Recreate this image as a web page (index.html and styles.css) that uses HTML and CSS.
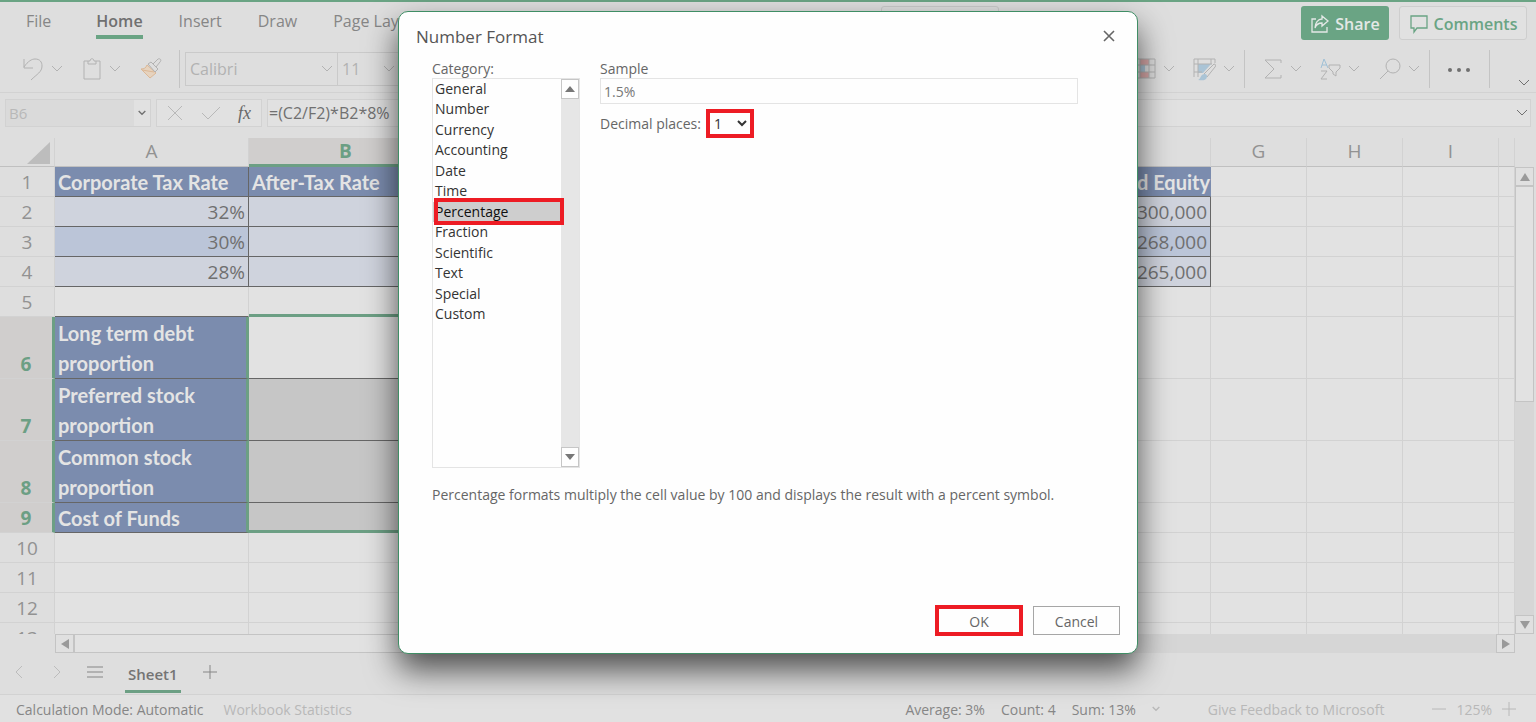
FILE: index.html
```html
<!DOCTYPE html>
<html lang="en">

<head>
    <meta charset="UTF-8">
    <meta name="viewport" content="width=device-width, initial-scale=1.0">
    <title>Number Format</title>
    <link rel="stylesheet" href="styles.css">
</head>

<body>

    <svg class="defs" aria-hidden="true">
        <symbol id="chev" viewBox="0 0 12 8"><path d="M1 1l5 5 5-5" /></symbol>
    </svg>

    <header class="tabs">
        <nav class="menu">
            <a href="#">File</a>
            <a href="#" class="active">Home</a>
            <a href="#">Insert</a>
            <a href="#">Draw</a>
            <a href="#">Page Layout</a>
        </nav>
        <div class="actions">
            <button class="mode" aria-label="Mode"></button>
            <button class="share">
                <svg width="20" height="20" viewBox="0 0 20 20"><path d="M6 5H2v13h15v-5M12 2l6 5-6 5V9C8 9 6 11 5 14c0-5 3-9 7-9z" /></svg>
                Share
            </button>
            <button class="comments">
                <svg width="20" height="20" viewBox="0 0 20 20"><path d="M2 2h16v12H8l-3 4v-4H2z" /></svg>
                Comments
            </button>
        </div>
    </header>

    <div class="ribbon">
        <div class="group left">
            <button class="tool" aria-label="Undo">
                <svg width="22" height="24" viewBox="0 0 22 24"><path d="M2 2v9h9M2 10C6 4 10 2 13 2c5 0 7 3 7 7 0 6-5 8-11 14" /></svg>
                <svg class="chev"><use href="#chev" /></svg>
            </button>
            <button class="tool" aria-label="Paste">
                <svg width="20" height="24" viewBox="0 0 20 24"><path d="M6 4H2v18h16V4h-4M6 7V4h2c0-3 4-3 4 0h2v3z" /></svg>
                <svg class="chev"><use href="#chev" /></svg>
            </button>
            <button class="tool" aria-label="Format Painter">
                <svg width="22" height="22" viewBox="0 0 22 22"><path class="orange" d="M7 7l9 8-6 5L1 11c3 0 5-1 6-4zM2 12l12 2" /><path d="M8 6l3-2 7 7-3 3zM13 6l5-5c2-1 4 1 2 3l-4 5" /></svg>
            </button>
            <span class="sep"></span>
            <div class="font">
                <button class="fname">Calibri <svg class="chev"><use href="#chev" /></svg></button>
                <button class="fsize">11 <svg class="chev"><use href="#chev" /></svg></button>
            </div>
        </div>
        <div class="group right">
            <button class="tool" aria-label="Conditional Formatting">
                <svg width="22" height="22" viewBox="0 0 22 22"><path class="red" d="M6 1h9v6H6zM6 14h9v6H6z" /><path class="blue" d="M6 7h5v7H6z" /><path d="M1 1h20v19H1zM1 7h20M1 14h20M6 1v19M15 1v19" /></svg>
                <svg class="chev"><use href="#chev" /></svg>
            </button>
            <button class="tool" aria-label="Format as Table">
                <svg width="24" height="24" viewBox="0 0 24 24"><path class="blue" d="M6 7h13l-8 9H6z" /><path d="M2 20V2h21v4M2 7h18M2 15h8M6 2v18M19 2v5" /><path d="M12 17L22 7c2 0 2 2 1 3l-8 10z" /><path class="blue" d="M12 17c3 0 4 2 2 5-2 2-5 1-8 1 3-1 2-5 6-6z" /></svg>
                <svg class="chev"><use href="#chev" /></svg>
            </button>
            <span class="sep"></span>
            <button class="tool" aria-label="AutoSum">
                <svg width="20" height="22" viewBox="0 0 20 22"><path d="M18 5V2H2l9 9-9 9h16v-3" /></svg>
                <svg class="chev"><use href="#chev" /></svg>
            </button>
            <button class="tool" aria-label="Sort and Filter">
                <svg width="22" height="24" viewBox="0 0 22 24"><path class="blueline" d="M2 11l3-9 4 9M3 8h5" /><path d="M2 14h6l-6 8h6M10 8h11v3l-4 4v4l-3-2v-2l-4-4z" /></svg>
                <svg class="chev"><use href="#chev" /></svg>
            </button>
            <button class="tool" aria-label="Find">
                <svg width="24" height="24" viewBox="0 0 24 24"><circle cx="16" cy="9" r="7" /><path d="M11 14l-8 8" /></svg>
                <svg class="chev"><use href="#chev" /></svg>
            </button>
            <span class="sep"></span>
            <button class="more" aria-label="More">
                <svg width="22" height="4" viewBox="0 0 22 4"><circle cx="2" cy="2" r="2" /><circle cx="11" cy="2" r="2" /><circle cx="20" cy="2" r="2" /></svg>
            </button>
            <span class="sep"></span>
            <button class="collapse" aria-label="Collapse Ribbon"><svg class="chev"><use href="#chev" /></svg></button>
        </div>
    </div>

    <div class="formula">
        <div class="namebox">
            <input type="text" value="B6" aria-label="Name Box">
            <button aria-label="Names"><svg class="chev small"><use href="#chev" /></svg></button>
        </div>
        <div class="fx">
            <svg width="16" height="16" viewBox="0 0 16 16"><path d="M1 1l14 14M15 1L1 15" /></svg>
            <svg width="20" height="16" viewBox="0 0 20 16"><path d="M1 8l6 6L19 2" /></svg>
            <i>fx</i>
        </div>
        <div class="bar">
            <input type="text" value="=(C2/F2)*B2*8%" aria-label="Formula">
            <svg class="chev"><use href="#chev" /></svg>
        </div>
    </div>

    <main class="sheet">
        <div class="grid">
            <table>
                <colgroup>
                    <col class="c-num">
                    <col class="c-wide" span="2">
                    <col class="c-mid" span="4">
                    <col class="c-norm" span="3">
                    <col>
                </colgroup>
                <thead>
                    <tr>
                        <th class="corner"><svg width="24" height="22" viewBox="0 0 24 22"><path d="M23 0v22H0z" /></svg></th>
                        <th>A</th><th class="sel">B</th><th>C</th><th>D</th><th>E</th><th>F</th><th>G</th><th>H</th><th>I</th><th></th>
                    </tr>
                </thead>
                <tbody>
                    <tr>
                        <th>1</th><td class="head">Corporate Tax Rate</td><td class="head">After-Tax Rate</td><td class="head"></td><td class="head"></td><td class="head"></td><td class="head end">d Equity</td><td></td><td></td><td></td><td></td>
                    </tr>
                    <tr>
                        <th>2</th><td class="val">32%</td><td class="val"></td><td class="val"></td><td class="val"></td><td class="val"></td><td class="val">300,000</td><td></td><td></td><td></td><td></td>
                    </tr>
                    <tr>
                        <th>3</th><td class="val dark">30%</td><td class="val"></td><td class="val"></td><td class="val"></td><td class="val"></td><td class="val dark">268,000</td><td></td><td></td><td></td><td></td>
                    </tr>
                    <tr>
                        <th>4</th><td class="val">28%</td><td class="val"></td><td class="val"></td><td class="val"></td><td class="val"></td><td class="val">265,000</td><td></td><td></td><td></td><td></td>
                    </tr>
                    <tr class="before">
                        <th>5</th><td></td><td></td><td></td><td></td><td></td><td></td><td></td><td></td><td></td><td></td>
                    </tr>
                    <tr class="picked">
                        <th>6</th><td class="head">Long term debt proportion</td><td class="cur"></td><td></td><td></td><td></td><td></td><td></td><td></td><td></td><td></td>
                    </tr>
                    <tr class="picked">
                        <th>7</th><td class="head">Preferred stock proportion</td><td></td><td></td><td></td><td></td><td></td><td></td><td></td><td></td><td></td>
                    </tr>
                    <tr class="picked">
                        <th>8</th><td class="head">Common stock proportion</td><td></td><td></td><td></td><td></td><td></td><td></td><td></td><td></td><td></td>
                    </tr>
                    <tr class="picked last">
                        <th>9</th><td class="head">Cost of Funds</td><td></td><td></td><td></td><td></td><td></td><td></td><td></td><td></td><td></td>
                    </tr>
                    <tr>
                        <th>10</th><td></td><td></td><td></td><td></td><td></td><td></td><td></td><td></td><td></td><td></td>
                    </tr>
                    <tr>
                        <th>11</th><td></td><td></td><td></td><td></td><td></td><td></td><td></td><td></td><td></td><td></td>
                    </tr>
                    <tr>
                        <th>12</th><td></td><td></td><td></td><td></td><td></td><td></td><td></td><td></td><td></td><td></td>
                    </tr>
                    <tr>
                        <th>13</th><td></td><td></td><td></td><td></td><td></td><td></td><td></td><td></td><td></td><td></td>
                    </tr>
                </tbody>
            </table>
        </div>
        <div class="vscroll">
            <button aria-label="Up"><svg width="10" height="8" viewBox="0 0 10 8"><path d="M5 0l5 8H0z" /></svg></button>
            <span class="thumb"></span>
            <span class="track"></span>
            <button aria-label="Down"><svg width="10" height="8" viewBox="0 0 10 8"><path d="M5 8l5-8H0z" /></svg></button>
        </div>
    </main>

    <div class="hscroll">
        <button aria-label="Left"><svg width="8" height="10" viewBox="0 0 8 10"><path d="M0 5l8-5v10z" /></svg></button>
        <span class="thumb"></span>
        <span class="track"></span>
        <button aria-label="Right"><svg width="8" height="10" viewBox="0 0 8 10"><path d="M8 5L0 0v10z" /></svg></button>
    </div>

    <div class="sheets">
        <button class="nav" aria-label="Previous"><svg width="8" height="14" viewBox="0 0 8 14"><path d="M7 1L1 7l6 6" /></svg></button>
        <button class="nav" aria-label="Next"><svg width="8" height="14" viewBox="0 0 8 14"><path d="M1 1l6 6-6 6" /></svg></button>
        <button class="list" aria-label="All Sheets"><svg width="16" height="14" viewBox="0 0 16 14"><path d="M0 2h16M0 7h16M0 12h16" /></svg></button>
        <button class="tab">Sheet1</button>
        <button class="add" aria-label="New Sheet"><svg width="14" height="14" viewBox="0 0 14 14"><path d="M7 0v14M0 7h14" /></svg></button>
    </div>

    <footer class="status">
        <span>Calculation Mode: Automatic</span>
        <span class="dim">Workbook Statistics</span>
        <div class="stats">
            <span>Average: 3%</span>
            <span>Count: 4</span>
            <span>Sum: 13%</span>
            <svg class="chev small dim"><use href="#chev" /></svg>
        </div>
        <a href="#" class="feedback dim">Give Feedback to Microsoft</a>
        <div class="zoom dim">
            <svg width="14" height="14" viewBox="0 0 14 14"><path d="M0 7h14" /></svg>
            <span>125%</span>
            <svg width="14" height="14" viewBox="0 0 14 14"><path d="M0 7h14M7 0v14" /></svg>
        </div>
    </footer>

    <div class="overlay">
        <form class="dialog">
            <div class="title">
                <h1>Number Format</h1>
                <button type="button" class="close" aria-label="Close"><svg width="12" height="12" viewBox="0 0 12 12"><path d="M1 1l10 10M11 1L1 11" /></svg></button>
            </div>
            <div class="content">
                <div class="category">
                    <label for="category">Category:</label>
                    <div class="listbox">
                        <select id="category" size="12">
                            <option>General</option>
                            <option>Number</option>
                            <option>Currency</option>
                            <option>Accounting</option>
                            <option>Date</option>
                            <option>Time</option>
                            <option selected>Percentage</option>
                            <option>Fraction</option>
                            <option>Scientific</option>
                            <option>Text</option>
                            <option>Special</option>
                            <option>Custom</option>
                        </select>
                        <div class="listscroll">
                            <button type="button" aria-label="Up"><svg width="10" height="6" viewBox="0 0 10 6"><path d="M5 0l5 6H0z" /></svg></button>
                            <button type="button" aria-label="Down"><svg width="10" height="6" viewBox="0 0 10 6"><path d="M5 6l5-6H0z" /></svg></button>
                        </div>
                        <span class="mark"></span>
                    </div>
                </div>
                <div class="options">
                    <label for="sample">Sample</label>
                    <input type="text" id="sample" value="1.5%" readonly>
                    <div class="places">
                        <label for="places">Decimal places:</label>
                        <select id="places">
                            <option>1</option>
                        </select>
                    </div>
                </div>
            </div>
            <p>Percentage formats multiply the cell value by 100 and displays the result with a percent symbol.</p>
            <div class="buttons">
                <button type="button" class="ok">OK</button>
                <button type="button" class="cancel">Cancel</button>
            </div>
        </form>
    </div>

</body>

</html>
```
FILE: styles.css
```css
*{
    margin: 0;
    padding: 0;
    box-sizing: border-box;
}
body{
    height: 100vh;
    display: flex;
    flex-direction: column;
    overflow: hidden;
    background: #dedede;
    border-top: 2px solid #6aa484;
    font-family: "Open Sans", "Noto Sans", sans-serif;
    font-size: 14px;
    color: #868686;
}
button, input, select{
    font: inherit;
    color: inherit;
    background: none;
    border: none;
    border-radius: 0;
    outline: none;
}
a{
    color: inherit;
    text-decoration: none;
}
svg{
    fill: none;
    stroke: currentColor;
    flex-shrink: 0;
}
.defs{
    position: absolute;
    width: 0;
    height: 0;
}
.chev{
    width: 12px;
    height: 8px;
}
.chev.small{
    width: 8px;
    height: 6px;
    stroke-width: 2;
}

/* tabs */
.tabs{
    height: 44px;
    flex-shrink: 0;
    display: flex;
    justify-content: space-between;
}
.menu{
    display: flex;
    align-items: flex-start;
    gap: 36px;
    padding-left: 26px;
    font-size: 16px;
    line-height: 22px;
}
.menu a{
    padding: 8px 0 3px;
    border-bottom: 4px solid transparent;
    white-space: nowrap;
}
.menu .active{
    margin-left: 9px;
    color: #707070;
    font-weight: 600;
    border-color: #6aa484;
}
.actions{
    display: flex;
    gap: 10px;
    padding: 4px 9px 0 0;
}
.actions button{
    display: flex;
    align-items: center;
    justify-content: center;
    gap: 5px;
    height: 34px;
    padding-top: 2px;
    border-radius: 3px;
    font-size: 16px;
    font-weight: 600;
}
.actions svg{
    stroke-width: 1.3;
}
.actions .mode{
    width: 118px;
    margin-right: 292px;
    border: 1px solid #cacaca;
}
.actions .share{
    width: 88px;
    background: #6aa484;
    color: #e4e8e6;
}
.actions .comments{
    width: 128px;
    background: #e1e1e1;
    border: 1px solid #cecece;
    color: #6aa484;
}

/* ribbon */
.ribbon{
    height: 47px;
    flex-shrink: 0;
    display: flex;
    justify-content: space-between;
    padding: 0 6px 0 22px;
    border-bottom: 1px solid #d2d2d2;
    color: #b2b2b2;
}
.group{
    display: flex;
    align-items: center;
    gap: 19px;
}
.group.right{
    gap: 17px;
}
.tool{
    display: flex;
    align-items: center;
    gap: 7px;
}
.sep{
    width: 1px;
    height: 38px;
    background: #c4c4c4;
}
.left .sep{
    margin-left: -2px;
}
.right .sep{
    margin: 0 1px 0 -8px;
}
.orange{
    stroke: #dcb896;
    fill: #e6d3bf;
}
.red{
    fill: #d8a8a8;
    stroke: none;
}
.blue{
    fill: #aac4d6;
    stroke: none;
}
.blueline{
    stroke: #9fc0d6;
}
.font{
    display: flex;
    margin-left: -14px;
    font-size: 16px;
}
.font button{
    display: flex;
    align-items: center;
    justify-content: space-between;
    height: 34px;
    padding: 0 4px;
    border: 1px solid #cacaca;
}
.font .fname{
    width: 153px;
}
.font .fsize{
    width: 62px;
    border-left: none;
}
.more{
    padding-right: 10px;
    line-height: 0;
}
.more svg{
    fill: #707070;
    stroke: none;
}
.collapse{
    align-self: flex-end;
    padding: 0 0 5px 10px;
    line-height: 0;
    color: #707070;
}

/* formula bar */
.formula{
    flex-shrink: 0;
    display: flex;
    gap: 5px;
    padding: 6px 5px 11px;
}
.formula > div{
    display: flex;
    align-items: center;
    height: 28px;
    border: 1px solid #d2d2d2;
    background: #e1e1e1;
}
.formula .namebox{
    width: 146px;
    font-size: 15px;
}
.namebox input{
    width: 128px;
    height: 26px;
    padding-left: 3px;
    background: #dadada;
    color: #b8b8b8;
}
.namebox button{
    flex: 1;
    display: flex;
    justify-content: center;
    color: #707070;
}
.fx{
    width: 106px;
    padding: 0 10px;
    justify-content: space-between;
    color: #b8b8b8;
}
.fx i{
    color: #686868;
    font-family: "Liberation Serif", serif;
    font-size: 18px;
}
.bar{
    flex: 1;
    padding: 0 2px 0 1px;
    color: #707070;
}
.bar input{
    flex: 1;
    font-size: 16px;
}

/* grid */
.sheet{
    flex: 1;
    min-height: 0;
    display: flex;
}
.grid{
    flex: 1;
    min-width: 0;
    overflow: hidden;
}
table{
    width: 100%;
    table-layout: fixed;
    border-collapse: separate;
    border-spacing: 0;
}
.c-num{
    width: 55px;
}
.c-wide{
    width: 194px;
}
.c-mid{
    width: 192px;
}
.c-norm{
    width: 96px;
}
th, td{
    padding-top: 2px;
    line-height: 27px;
    border-right: 1px solid #d2d2d2;
    border-bottom: 1px solid #d2d2d2;
    vertical-align: bottom;
}
th{
    font-size: 19px;
    font-weight: 400;
    color: #929292;
}
thead th{
    height: 29px;
    padding-top: 0;
    line-height: 26px;
    vertical-align: top;
    border-bottom-color: #c0c0c0;
}
thead .corner{
    text-align: right;
    line-height: 0;
    padding: 4px 3px 0 0;
}
.corner svg{
    fill: #bdbdbd;
    stroke: none;
}
thead .sel{
    background: #d0cecd;
    color: #6c9f84;
    font-weight: 700;
    border-bottom: 3px solid #6c9f84;
}
td{
    background: #e2e2e2;
}
.head{
    padding-left: 3px;
    background: #7b8cae;
    border-color: #666;
    color: #e4e4e4;
    font-family: Lato, "Open Sans", sans-serif;
    font-size: 20px;
    font-weight: 700;
}
.head.end{
    text-align: right;
    border-right-color: #7b8cae;
}
.val{
    height: 30px;
    padding-right: 3px;
    background: #cfd3dd;
    border-color: #666;
    color: #707070;
    font-size: 19px;
    text-align: right;
}
.val.dark{
    background: #bbc5d8;
}
.before td:nth-child(2){
    border-bottom-color: #666;
}
.before td:nth-child(3){
    border-bottom: 3px solid #6c9f84;
}
.picked th{
    background: #d0cecd;
    color: #6c9f84;
    font-weight: 700;
    border-right: 3px solid #6c9f84;
}
.picked .head{
    padding-top: 1px;
    line-height: 30px;
    border-right: 3px solid #6c9f84;
}
.picked td:nth-child(3){
    background: #c6c6c6;
    border-bottom-color: #666;
}
.picked .cur:nth-child(3){
    background: #e2e2e2;
}
.picked.last .head{
    line-height: 27px;
}
.picked.last td:nth-child(3){
    border-bottom: 3px solid #6c9f84;
}

/* scroll bars */
.vscroll{
    width: 21px;
    padding: 29px 2px 0 0;
    display: flex;
    flex-direction: column;
}
.vscroll button, .hscroll button{
    display: flex;
    align-items: center;
    justify-content: center;
    width: 19px;
    height: 19px;
    flex-shrink: 0;
    border: 1px solid #c4c4c4;
    background: #e0e0e0;
    color: #9a9a9a;
}
.vscroll svg, .hscroll svg{
    fill: currentColor;
    stroke: none;
}
.thumb{
    background: #e2e2e2;
    border: 1px solid #c4c4c4;
}
.track{
    background: #d6d6d6;
}
.vscroll .thumb, .vscroll .track{
    flex: 1;
}
.hscroll{
    display: flex;
    padding: 0 21px 0 55px;
}
.hscroll .thumb, .hscroll .track{
    flex: 1;
}

/* sheet tabs */
.sheets{
    height: 41px;
    flex-shrink: 0;
    display: flex;
    align-items: center;
    gap: 30px;
    padding-left: 15px;
}
.sheets .nav{
    color: #bcbcbc;
}
.sheets .list{
    margin: 0 -8px 0 -4px;
}
.sheets .tab{
    align-self: flex-end;
    height: 36px;
    margin: 0 -8px 1px 0;
    padding: 0 3px;
    border-bottom: 3px solid #6c9f84;
    color: #747474;
    font-size: 15px;
    font-weight: 600;
}

/* status bar */
.status{
    height: 28px;
    flex-shrink: 0;
    display: flex;
    align-items: center;
    gap: 20px;
    padding: 1px 20px 0 16px;
    background: #e1e1e1;
    border-top: 1px solid #d2d2d2;
    white-space: nowrap;
}
.dim{
    color: #b8b8b8;
}
.stats{
    display: flex;
    align-items: center;
    gap: 16px;
    margin-left: auto;
}
.feedback{
    margin: 0 28px;
}
.zoom{
    display: flex;
    align-items: center;
    gap: 10px;
}

/* dialog */
.overlay{
    position: absolute;
    inset: 0;
    display: flex;
    justify-content: center;
    padding: 11px 0 68px;
}
.dialog{
    width: 740px;
    display: flex;
    flex-direction: column;
    padding: 13px 17px 17px;
    background: #fefefe;
    border: 1px solid #3f8e65;
    border-radius: 10px;
    box-shadow: 0 16px 32px rgba(0, 0, 0, .65);
    color: #666;
}
.title{
    display: flex;
    justify-content: space-between;
    align-items: center;
}
h1{
    font-size: 17px;
    line-height: 24px;
    font-weight: 400;
    color: #555;
}
.close{
    padding: 0 5px 2px;
    line-height: 0;
    color: #666;
}
.close svg{
    stroke-width: 1.6;
}
.content{
    display: flex;
    gap: 20px;
    padding: 11px 42px 0 16px;
    line-height: 18px;
}
.category{
    width: 148px;
}
.category label, .options label{
    display: block;
}
.listbox{
    position: relative;
    display: flex;
    height: 390px;
    border: 1px solid #e4e4e4;
}
.listbox select{
    flex: 1;
    min-width: 0;
    overflow: hidden;
    color: #333;
}
.listbox option{
    padding: 0 2px;
    min-height: 20px;
}
.listbox option:nth-child(even){
    min-height: 21px;
}
.listscroll{
    width: 18px;
    display: flex;
    flex-direction: column;
    justify-content: space-between;
    background: #e6e6e6;
}
.listscroll button{
    height: 20px;
    line-height: 0;
    border: 1px solid #c6c6c6;
    background: #fefefe;
    color: #777;
}
.listscroll svg{
    fill: currentColor;
    stroke: none;
}
.mark{
    position: absolute;
    top: 119px;
    left: 1px;
    width: 130px;
    height: 27px;
    border: 4px solid #ed1c24;
    pointer-events: none;
}
.options{
    flex: 1;
}
#sample{
    display: block;
    width: 100%;
    height: 26px;
    padding: 0 3px;
    border: 1px solid #e4e4e4;
    color: #777;
}
.places{
    display: flex;
    align-items: center;
    gap: 5px;
    padding-top: 5px;
}
#places{
    width: 48px;
    height: 29px;
    border: 4px solid #ed1c24;
    color: #333;
}
.dialog p{
    padding: 17px 16px 0;
    line-height: 20px;
}
.buttons{
    display: flex;
    align-items: center;
    justify-content: flex-end;
    gap: 10px;
    margin-top: auto;
}
.buttons button{
    width: 87px;
    height: 29px;
    padding-top: 1px;
    border: 1px solid #a6a6a6;
}
.buttons .ok{
    width: 88px;
    height: 31px;
    border: 4px solid #ed1c24;
}
```
